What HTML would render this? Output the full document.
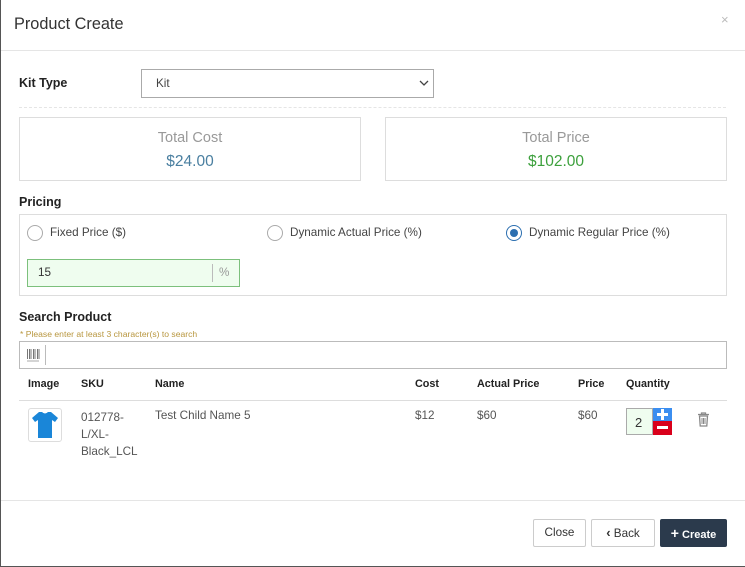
<!DOCTYPE html>
<html><head><style>
*{box-sizing:border-box;margin:0;padding:0}
body{width:745px;height:567px;background:#fff;font-family:"Liberation Sans",sans-serif;color:#333;position:relative;overflow:hidden;font-size:11.7px}
.frame{position:absolute;left:0;top:0;width:745px;height:567px;border-left:1px solid #555;border-bottom:1px solid #555}
.abs{position:absolute}
.box{position:absolute;border:1px solid #ddd}
</style></head><body>
<div class="frame"></div>
<div class="abs" style="left:14px;top:15px;font-size:16.3px;color:#333">Product Create</div>
<div class="abs" style="left:721px;top:12px;font-size:13px;color:#bbb">×</div>
<div class="abs" style="left:1px;top:50px;width:744px;height:1px;background:#e5e5e5"></div>

<div class="abs" style="left:19px;top:76px;font-size:12.5px;font-weight:bold;color:#222">Kit Type</div>
<div class="box" style="left:141px;top:69px;width:293px;height:29px;border-color:#aaa"></div>
<div class="abs" style="left:156px;top:77px;color:#444">Kit</div>
<svg class="abs" style="left:419px;top:79px" width="10" height="8"><path d="M1 2 L5 6 L9 2" stroke="#444" fill="none" stroke-width="1.3"/></svg>
<div class="abs" style="left:19px;top:107px;width:707px;border-top:1px dashed #e5e5e5"></div>

<div class="box" style="left:19px;top:117px;width:342px;height:64px"></div>
<div class="abs" style="left:19px;top:130px;width:342px;text-align:center;font-size:14.5px;color:#999">Total Cost</div>
<div class="abs" style="left:19px;top:153px;width:342px;text-align:center;font-size:15.5px;color:#4a7fa0">$24.00</div>
<div class="box" style="left:385px;top:117px;width:342px;height:64px"></div>
<div class="abs" style="left:385px;top:130px;width:342px;text-align:center;font-size:14.5px;color:#999">Total Price</div>
<div class="abs" style="left:385px;top:153px;width:342px;text-align:center;font-size:15.5px;color:#3ca03c">$102.00</div>

<div class="abs" style="left:19px;top:195px;font-size:12.5px;font-weight:bold;color:#222">Pricing</div>
<div class="box" style="left:19px;top:214px;width:708px;height:82px"></div>
<div class="abs" style="left:27px;top:225px;width:16px;height:16px;border:1px solid #aaa;border-radius:50%"></div>
<div class="abs" style="left:50px;top:226px;color:#444">Fixed Price ($)</div>
<div class="abs" style="left:267px;top:225px;width:16px;height:16px;border:1px solid #aaa;border-radius:50%"></div>
<div class="abs" style="left:290px;top:226px;color:#444">Dynamic Actual Price (%)</div>
<div class="abs" style="left:506px;top:225px;width:16px;height:16px;border:1px solid #2c6fb0;border-radius:50%"><div style="margin:3px;width:8px;height:8px;border-radius:50%;background:#2c6fb0"></div></div>
<div class="abs" style="left:529px;top:226px;color:#444">Dynamic Regular Price (%)</div>
<div class="abs" style="left:27px;top:259px;width:213px;height:28px;border:1px solid #7cc07c;background:#effdef"></div>
<div class="abs" style="left:38px;top:266px;color:#333">15</div>
<div class="abs" style="left:212px;top:264px;width:1px;height:18px;background:#bbb"></div>
<div class="abs" style="left:219px;top:266px;color:#999">%</div>

<div class="abs" style="left:19px;top:310px;font-size:12.5px;font-weight:bold;color:#222">Search Product</div>
<div class="abs" style="left:20px;top:329px;font-size:8.6px;color:#b8963e">* Please enter at least 3 character(s) to search</div>
<div class="box" style="left:19px;top:341px;width:708px;height:28px;border-color:#bbb"></div>
<svg class="abs" style="left:26px;top:348px" width="14" height="14"><g stroke="#777" stroke-width="1"><path d="M1.5 1v10M3.5 1v10M5 1v10M7.5 1v10M9 1v10M11.5 1v10M13 1v10"/></g><path d="M1 13h12" stroke="#aaa"/></svg>
<div class="abs" style="left:45px;top:345px;width:1px;height:20px;background:#bbb"></div>

<div class="abs" style="top:378px;left:28px;font-weight:bold;font-size:10.8px;color:#222">Image</div>
<div class="abs" style="top:378px;left:81px;font-weight:bold;font-size:10.8px;color:#222">SKU</div>
<div class="abs" style="top:378px;left:155px;font-weight:bold;font-size:10.8px;color:#222">Name</div>
<div class="abs" style="top:378px;left:415px;font-weight:bold;font-size:10.8px;color:#222">Cost</div>
<div class="abs" style="top:378px;left:477px;font-weight:bold;font-size:10.8px;color:#222">Actual Price</div>
<div class="abs" style="top:378px;left:578px;font-weight:bold;font-size:10.8px;color:#222">Price</div>
<div class="abs" style="top:378px;left:626px;font-weight:bold;font-size:10.8px;color:#222">Quantity</div>
<div class="abs" style="left:19px;top:400px;width:708px;height:1px;background:#ddd"></div>

<div class="abs" style="left:28px;top:408px;width:34px;height:34px;border:1px solid #ddd;border-radius:3px"></div>
<svg class="abs" style="left:30px;top:410px" width="30" height="30"><path d="M9 2 L12 2 Q15 5 18 2 L21 2 L28 8 L25 12 L22 10 L22 28 L8 28 L8 10 L5 12 L2 8 Z" fill="#1a86d8"/></svg>
<div class="abs" style="left:81px;top:409px;line-height:17px;color:#555">012778-<br>L/XL-<br>Black_LCL</div>
<div class="abs" style="left:155px;top:409px;color:#555">Test Child Name 5</div>
<div class="abs" style="left:415px;top:409px;color:#555">$12</div>
<div class="abs" style="left:477px;top:409px;color:#555">$60</div>
<div class="abs" style="left:578px;top:409px;color:#555">$60</div>
<div class="abs" style="left:626px;top:408px;width:27px;height:27px;border:1px solid #aaa;background:#effdef"></div>
<div class="abs" style="left:635px;top:415px;font-size:13px;color:#333">2</div>
<div class="abs" style="left:653px;top:408px;width:19px;height:13px;background:#3b8ef0"><div class="abs" style="left:4px;top:5px;width:11px;height:3px;background:#fff"></div><div class="abs" style="left:8px;top:1px;width:3px;height:11px;background:#fff"></div></div>
<div class="abs" style="left:653px;top:421px;width:19px;height:14px;background:#d9001b"><div style="margin:5px 4px;height:3px;background:#fff"></div></div>
<svg class="abs" style="left:697px;top:412px" width="13" height="15"><path d="M1 2.5h11M4.5 2.5V1h4v1.5M2.5 4h8l-0.7 10h-6.6z" stroke="#888" fill="none" stroke-width="1.3"/><path d="M5 6v6M6.5 6v6M8 6v6" stroke="#888"/></svg>

<div class="abs" style="left:1px;top:500px;width:744px;height:1px;background:#e5e5e5"></div>
<div class="abs" style="left:533px;top:519px;width:53px;height:28px;border:1px solid #ccc;border-radius:2px;text-align:center;line-height:26px;color:#333">Close</div>
<div class="abs" style="left:591px;top:519px;width:64px;height:28px;border:1px solid #ccc;border-radius:2px;text-align:center;line-height:26px;color:#333"><b style="font-size:13px">‹</b> Back</div>
<div class="abs" style="left:660px;top:519px;width:67px;height:28px;background:#2b3a4c;border-radius:2px;text-align:center;line-height:28px;color:#fff;font-weight:bold;font-size:11px"><span style="font-size:14px">+</span> Create</div>
</body></html>
